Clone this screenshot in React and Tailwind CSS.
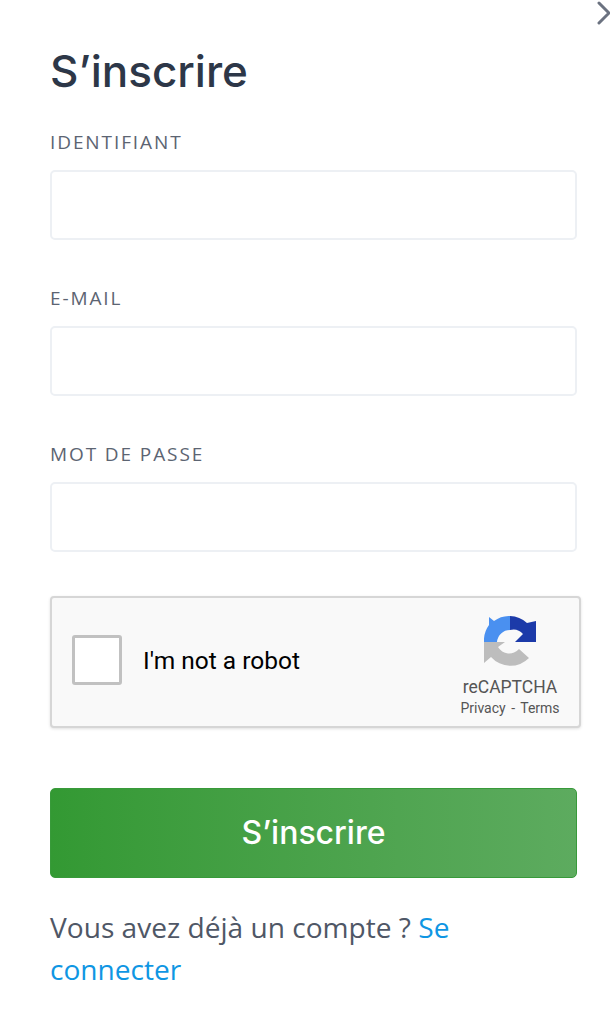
import { ChevronRight } from 'lucide-react';

const FIELDS = ['IDENTIFIANT', 'E-MAIL', 'MOT DE PASSE'];

function RecaptchaLogo() {
  return (
    <svg width="52" height="52" viewBox="0 0 52 52" className="block">
      <path d="M5 1 L10 5 A26 26 0 0 1 26 0 L26 14 A13 13 0 0 0 13 26 L0 26 A26 26 0 0 1 5 9 Z" fill="#4a90f0" />
      <path d="M26 0 A26 26 0 0 1 43 7 L52 5 L52 26 L31 26 L39 18 A13 13 0 0 0 26 14 Z" fill="#1c3aa9" />
      <path d="M35 33 A13 13 0 0 1 14 31 L21 26 L0 26 L0 47 L7 41 A26 26 0 0 0 45 42 Z" fill="#bdbdbd" />
    </svg>
  );
}

export default function App() {
  return (
    <div className="relative h-[1024px] w-[610px] overflow-hidden bg-white pl-[50px] pr-[33px] pt-[43px] font-['Open_Sans',sans-serif]">
      <ChevronRight className="absolute right-[-14px] top-[-7px] h-[40px] w-[40px] text-[#6b7280]" strokeWidth={1.8} />

      <h1 className="text-[44px] font-medium leading-[56px] text-[#2d3748] font-['Inter',sans-serif]">S’inscrire</h1>

      <form className="mt-[30px]">
        {FIELDS.map((label) => (
          <div key={label} className="mb-[45px]">
            <label className="block text-[19px] leading-[26px] tracking-[0.1em] text-[#5c6472]">{label}</label>
            <input className="mt-[15px] block h-[70px] w-full rounded-[5px] border-2 border-[#edf0f4] bg-white" />
          </div>
        ))}

        <div className="-mt-px flex h-[132px] w-[531px] items-stretch rounded-[4px] border-2 border-[#d6d6d6] bg-[#f9f9f9] pl-[20px] shadow-[0_1px_3px_rgba(0,0,0,0.12)] font-['Roboto',sans-serif]">
          <div className="flex items-center pb-[4px]">
            <div className="h-[50px] w-[50px] rounded-[3px] border-[3px] border-[#c1c1c1] bg-white" />
            <span className="ml-[21px] pt-[2px] text-[24.5px] text-black">I'm not a robot</span>
          </div>
          <div className="ml-auto flex w-[138px] flex-col items-center pt-[18px]">
            <RecaptchaLogo />
            <span className="mt-[8px] text-[17.5px] leading-[22px] text-[#555555]">reCAPTCHA</span>
            <span className="text-[14px] leading-[20px] text-[#555555] [word-spacing:2px]">Privacy - Terms</span>
          </div>
        </div>

        <button
          type="button"
          className="mt-[60px] block h-[90px] w-full rounded-[5px] border border-[#389a3a] bg-gradient-to-r from-[#339933] to-[#5dab5f] text-[32px] font-medium text-white font-['Inter',sans-serif]"
        >
          S’inscrire
        </button>
      </form>

      <p className="mt-[28px] text-[28.1px] leading-[42px] text-[#4f5766]">
        Vous avez déjà un compte ? <a className="text-[#0f96e3]">Se connecter</a>
      </p>
    </div>
  );
}
